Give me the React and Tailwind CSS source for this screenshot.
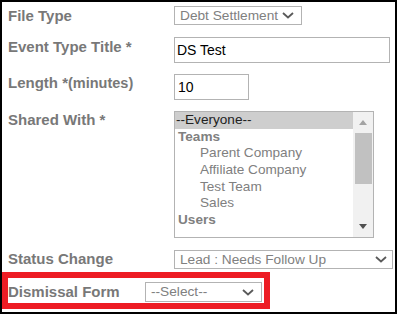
import React from "react";

const Chevron = () => (
  <svg width="12" height="7" viewBox="0 0 12 7" className="shrink-0">
    <polyline points="1,1 6,5.5 11,1" fill="none" stroke="#5a5a5a" strokeWidth="1.8" />
  </svg>
);

const Select = ({ text, className }) => (
  <div
    className={
      "flex items-center justify-between border border-[#b3b3b3] bg-white pl-[5px] text-[13.7px] leading-none text-[#808080] " +
      className
    }
  >
    <span>{text}</span>
    <Chevron />
  </div>
);

const Label = ({ children, className }) => (
  <div className={"w-[172px] shrink-0 pl-[6px] text-[15px] font-bold text-[#787878] " + className}>
    {children}
  </div>
);

export default function App() {
  return (
    <div
      className="w-[397px] h-[314px] border-2 border-black bg-white pt-[4px]"
      style={{ fontFamily: '"Liberation Sans", Arial, sans-serif' }}
    >
      {/* File Type */}
      <div className="flex">
        <Label className="leading-[19px]">File Type</Label>
        <Select text="Debt Settlement" className="w-[128px] h-[19px] pr-[7px]" />
      </div>

      {/* Event Type Title */}
      <div className="flex mt-[12px]">
        <Label className="leading-[19px]">Event Type Title *</Label>
        <div className="w-[216px] h-[26px] border border-[#b3b3b3] flex items-center pl-[2px] text-[14px] text-black">
          DS Test
        </div>
      </div>

      {/* Length */}
      <div className="flex mt-[11px]">
        <Label className="leading-[18px]">
          Length *<span className="text-[14.5px]">(minutes)</span>
        </Label>
        <div className="w-[75px] h-[26px] border border-[#b3b3b3] flex items-center pl-[3px] text-[14px] text-black">
          10
        </div>
      </div>

      {/* Shared With */}
      <div className="flex mt-[11px]">
        <Label className="leading-[18px]">Shared With *</Label>
        <div className="w-[200px] h-[127px] border border-[#b3b3b3] flex">
          <div className="flex-1 text-[13.6px] leading-[16.67px] text-[#808080]">
            <div className="bg-[#cecece] pl-[1px] text-[#222]">--Everyone--</div>
            <div className="pl-[3px] font-bold">Teams</div>
            <div className="pl-[25px]">Parent Company</div>
            <div className="pl-[25px]">Affiliate Company</div>
            <div className="pl-[25px]">Test Team</div>
            <div className="pl-[25px]">Sales</div>
            <div className="pl-[3px] font-bold">Users</div>
          </div>
          <div className="w-[20px] bg-[#f1f1f1] flex flex-col items-center">
            <div className="h-[21px] flex items-center justify-center">
              <svg width="8" height="5" viewBox="0 0 8 5">
                <polygon points="0,5 8,5 4,0" fill="#a3a3a3" />
              </svg>
            </div>
            <div className="w-[17px] h-[51px] bg-[#c1c1c1] ml-[1px]" />
            <div className="flex-1" />
            <div className="h-[21px] flex items-center justify-center">
              <svg width="8" height="5" viewBox="0 0 8 5">
                <polygon points="0,0 8,0 4,5" fill="#505050" />
              </svg>
            </div>
          </div>
        </div>
      </div>

      {/* Status Change */}
      <div className="flex mt-[12px]">
        <Label className="leading-[17px]">Status Change</Label>
        <Select text="Lead : Needs Follow Up" className="w-[219px] h-[19px] pr-[5px]" />
      </div>

      {/* Dismissal Form */}
      <div className="mt-[3px] w-[268px] h-[37px] border-[6px] border-[#ed1c24] flex items-start pt-[4px]">
        <div className="w-[138px] shrink-0 text-[15px] font-bold text-[#787878] leading-[20px] -ml-[1px] pl-[1px]">
          Dismissal Form
        </div>
        <Select text="--Select--" className="w-[117px] h-[20px] pr-[7px]" />
      </div>
    </div>
  );
}
